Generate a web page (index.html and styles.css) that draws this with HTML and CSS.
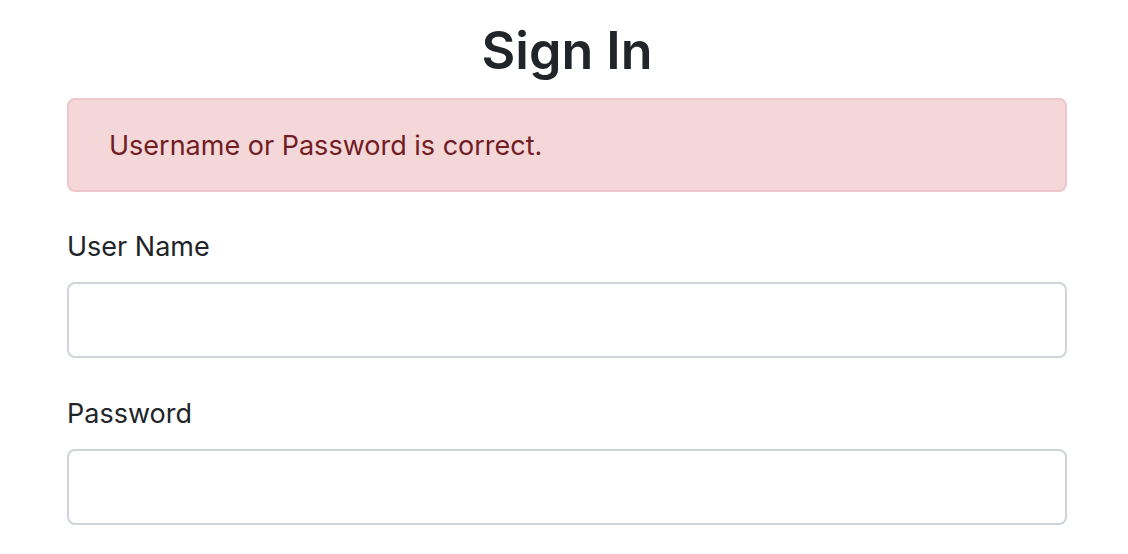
FILE: index.html
```html
<!DOCTYPE html>
<html lang="en">
<head>
<meta charset="utf-8">
<title>Sign In</title>
<link rel="stylesheet" href="styles.css">
</head>
<body>
<main class="container">
  <h1 class="title">Sign In</h1>
  <div class="alert">Username or Password is correct.</div>
  <form class="form">
    <div class="form-group">
      <label class="label" for="username">User Name</label>
      <input class="input" id="username" type="text">
    </div>
    <div class="form-group">
      <label class="label" for="password">Password</label>
      <input class="input" id="password" type="password">
    </div>
  </form>
</main>
</body>
</html>
```
FILE: styles.css
```css
html, body {
  margin: 0;
  padding: 0;
  background: #ffffff;
}
body {
  font-family: Inter, "Noto Sans", "Liberation Sans", sans-serif;
  color: #212529;
  font-size: 27px;
  line-height: 42px;
}
.container {
  width: 1000px;
  margin-left: 67px;
  display: flex;
  flex-direction: column;
}
.title {
  margin: 20px 0 16px;
  font-size: 52px;
  line-height: 62px;
  font-weight: 600;
  text-align: center;
  color: #212529;
}
.alert {
  box-sizing: border-box;
  height: 94px;
  padding: 25px 40px 23px;
  border: 2px solid #efc6c9;
  border-radius: 8px;
  background: #f3d7d9;
  color: #721c24;
  margin-bottom: 34px;
}
.form {
  display: flex;
  flex-direction: column;
  gap: 35px;
  margin: 0;
}
.form-group {
  display: flex;
  flex-direction: column;
  gap: 14px;
}
.label {
  display: block;
}
.input {
  box-sizing: border-box;
  height: 76px;
  width: 100%;
  border: 2px solid #ced4da;
  border-radius: 8px;
  background: #fff;
  font: inherit;
  padding: 0 24px;
  outline: none;
}
```
